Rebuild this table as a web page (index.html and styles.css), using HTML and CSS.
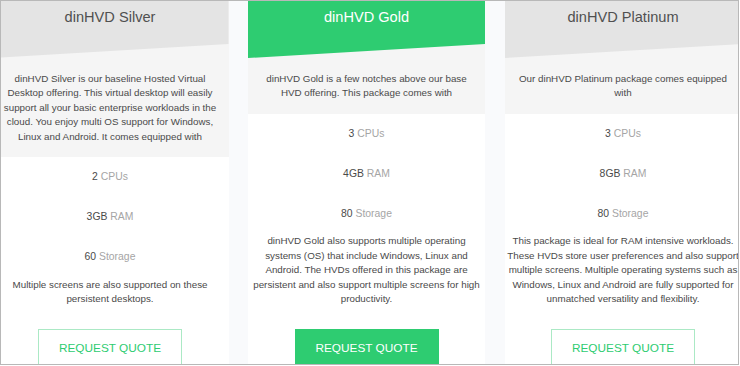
FILE: index.html
```html
<!DOCTYPE html>
<html lang="en">
<head>
<meta charset="utf-8">
<title>dinHVD Pricing</title>
<link rel="stylesheet" href="styles.css">
</head>
<body>
<div class="frame">
  <div class="row">
    <section class="card">
      <div class="top">
        <div class="head"><h2 class="title">dinHVD Silver</h2></div>
        <p class="desc">dinHVD Silver is our baseline Hosted Virtual Desktop offering. This virtual desktop will easily support all your basic enterprise workloads in the cloud. You enjoy multi OS support for Windows, Linux and Android. It comes equipped with</p>
      </div>
      <ul class="specs">
        <li><b>2</b> CPUs</li>
        <li><b>3GB</b> RAM</li>
        <li><b>60</b> Storage</li>
      </ul>
      <p class="note">Multiple screens are also supported on these persistent desktops.</p>
      <div class="cta"><a class="btn">REQUEST QUOTE</a></div>
    </section>
    <section class="card featured">
      <div class="top">
        <div class="head"><h2 class="title">dinHVD Gold</h2></div>
        <p class="desc">dinHVD Gold is a few notches above our base HVD offering. This package comes with</p>
      </div>
      <ul class="specs">
        <li><b>3</b> CPUs</li>
        <li><b>4GB</b> RAM</li>
        <li><b>80</b> Storage</li>
      </ul>
      <p class="note">dinHVD Gold also supports multiple operating systems (OS) that include Windows, Linux and Android. The HVDs offered in this package are persistent and also support multiple screens for high productivity.</p>
      <div class="cta"><a class="btn">REQUEST QUOTE</a></div>
    </section>
    <section class="card">
      <div class="top">
        <div class="head"><h2 class="title">dinHVD Platinum</h2></div>
        <p class="desc">Our dinHVD Platinum package comes equipped with</p>
      </div>
      <ul class="specs">
        <li><b>3</b> CPUs</li>
        <li><b>8GB</b> RAM</li>
        <li><b>80</b> Storage</li>
      </ul>
      <p class="note">This package is ideal for RAM intensive workloads. These HVDs store user preferences and also support multiple screens. Multiple operating systems such as Windows, Linux and Android are fully supported for unmatched versatility and flexibility.</p>
      <div class="cta"><a class="btn">REQUEST QUOTE</a></div>
    </section>
  </div>
</div>
</body>
</html>
```

FILE: styles.css
```css
* { box-sizing: border-box; }
html, body {
  margin: 0;
  padding: 0;
  background: #ffffff;
}
body {
  font-family: "Liberation Sans", Arial, sans-serif;
  color: #4a4a4a;
}
.frame {
  width: 739px;
  height: 365px;
  border: 1px solid #b8b8b8;
  background: #f9fafc;
  overflow: hidden;
}
.row {
  display: flex;
  gap: 19.5px;
  margin-left: -9.5px;
  height: 100%;
}
.card {
  flex: 0 0 237px;
  background: #ffffff;
  text-align: center;
}
.top {
  background: #f5f5f5;
}
.head {
  height: 57px;
  background: #e4e4e4;
  clip-path: polygon(0 0, 100% 0, 100% 43px, 0 100%);
  padding-top: 8px;
}
.featured .head {
  background: #2ecc71;
}
.title {
  margin: 0;
  font-size: 14.6px;
  line-height: 17px;
  font-weight: normal;
  color: #505050;
}
.featured .title {
  color: #ffffff;
}
.desc {
  margin: 0;
  padding: 14px 9.5px 13px;
  font-size: 9.8px;
  line-height: 14.4px;
  color: #4a4a4a;
}
.specs {
  list-style: none;
  margin: 0;
  padding: 0;
}
.specs li {
  padding: 13px 0 12.8px;
  font-size: 10.4px;
  line-height: 14.4px;
  color: #a5a5a5;
}
.specs b {
  font-weight: normal;
  color: #4a4a4a;
}
.note {
  margin: 0;
  padding: 0 2px;
  font-size: 9.8px;
  line-height: 14.4px;
  color: #4a4a4a;
}
.cta {
  padding-top: 23px;
}
.btn {
  display: inline-block;
  width: 144px;
  padding: 11px 0;
  border: 1px solid #abe9c5;
  font-size: 11.8px;
  line-height: 14px;
  color: #2ecc71;
}
.featured .btn {
  background: #2ecc71;
  border-color: #2ecc71;
  color: #ffffff;
}
```
